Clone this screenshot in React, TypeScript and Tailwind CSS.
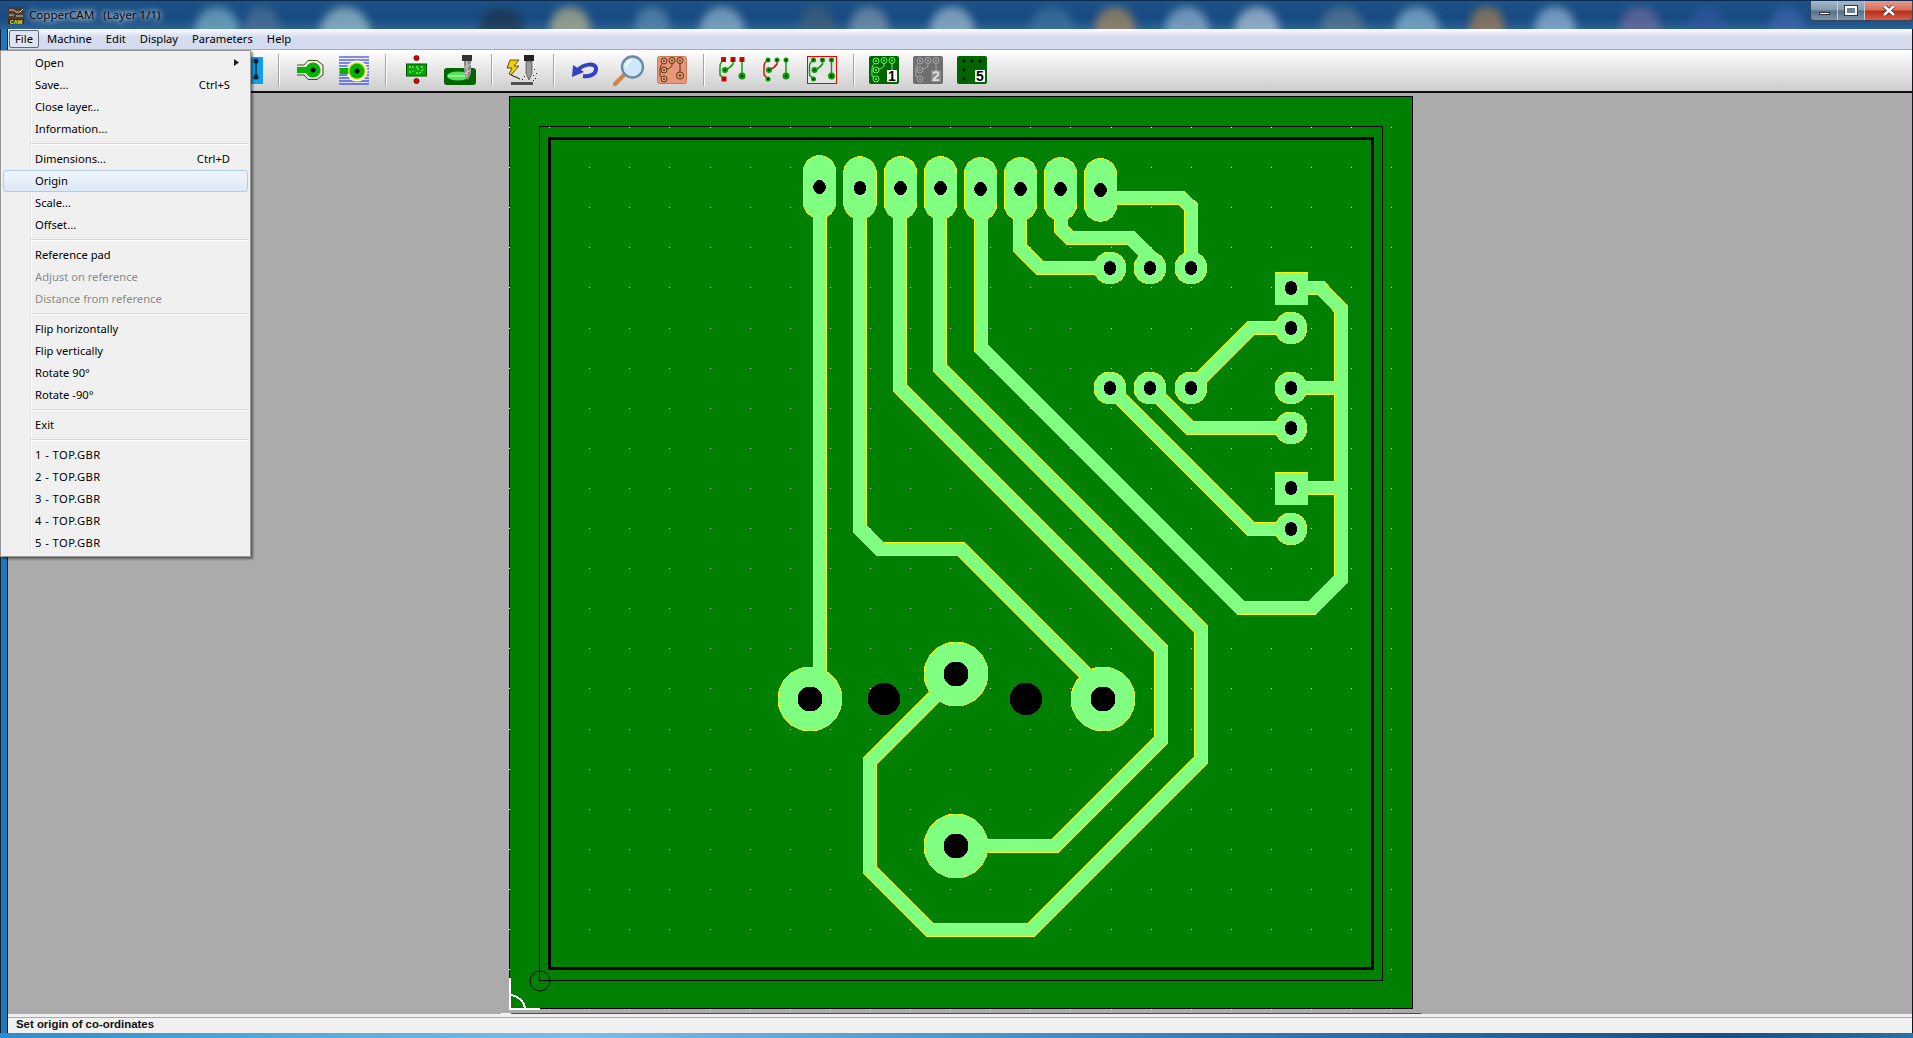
import React from 'react';

const COPPER = '#80ff80';
const EDGE = '#ffff00';

// trace centre lines, taken from the board picture
const traces: string[] = [
  '820,187 820,699',
  '860,188 860,529 880,549 961,549 1098,686',
  '900,188 900,388 1161,649 1161,740 1055,846 956,846',
  '940,188 940,368 1201,629 1201,760 1031,930 930,930 870,870 870,761 956,675',
  '981,189 981,348 1241,608 1312,608 1341,579 1341,309 1321,288 1291,288',
  '1020,189 1020,248 1040,268 1110,268',
  '1061,189 1061,229 1070,238 1131,238 1150,257 1150,268',
  '1100,198 1181,198 1191,207 1191,268',
  '1191,388 1251,328 1291,328',
  '1150,388 1190,428 1291,428',
  '1110,388 1251,529 1291,529',
  '1291,388 1341,388',
  '1291,488 1341,488',
];

const oblongs = [
  [819.5, 187],
  [860, 188],
  [900.5, 188],
  [940.5, 188],
  [980.5, 189],
  [1020.5, 189],
  [1060.5, 189],
  [1100.5, 190],
];
const smallPads = [
  [1110, 268],
  [1150, 268],
  [1191, 268],
  [1110, 388],
  [1150, 388],
  [1191, 388],
  [1291, 328],
  [1291, 388],
  [1291, 428],
  [1291, 529],
];
const squarePads = [
  [1291, 288],
  [1291, 488],
];
const bigPads = [
  [810, 699],
  [956, 674],
  [1103, 699],
  [956, 846],
];

function CopperLayer({ color, grow }: { color: string; grow: number }) {
  return (
    <g fill={color} stroke="none">
      {traces.map((t) => (
        <polyline key={t} points={t} fill="none" stroke={color} strokeWidth={12.8 + grow * 2} strokeLinejoin="miter" />
      ))}
      {oblongs.map(([x, y]) => (
        <rect key={x} x={x - 16 - grow} y={y - 31 - grow} width={32 + grow * 2} height={62 + grow * 2} rx={16 + grow} />
      ))}
      {smallPads.map(([x, y]) => (
        <circle key={`${x}-${y}`} cx={x} cy={y} r={15.7 + grow} />
      ))}
      {squarePads.map(([x, y]) => (
        <rect key={y} x={x - 15.5 - grow} y={y - 15.5 - grow} width={32 + grow * 2} height={32 + grow * 2} />
      ))}
      {bigPads.map(([x, y]) => (
        <circle key={`${x}-${y}`} cx={x} cy={y} r={31.7 + grow} />
      ))}
    </g>
  );
}

function Board() {
  const dots: React.ReactNode[] = [];
  for (let i = 0; i <= 22; i++) {
    for (let j = 0; j <= 22; j++) {
      dots.push(<rect key={`${i}-${j}`} x={Math.round(509 + i * 40.1)} y={Math.round(127 + j * 40.1)} width={1} height={1} fill="#fff" />);
    }
  }
  return (
    <svg width="920" height="921" viewBox="501 93 920 921" shapeRendering="crispEdges" className="block">
      <rect x="509.5" y="96.5" width="903" height="912" fill="#008000" stroke="#000" />
      {dots}
      <rect x="539.5" y="126.5" width="843" height="854" fill="none" stroke="#000" />
      <rect x="549.5" y="138.5" width="823" height="830" fill="none" stroke="#000" strokeWidth="3" />
      <circle cx="540" cy="981" r="10" fill="none" stroke="#000" shapeRendering="auto" />
      <path d="M510 978 V1008.5 H540 M511 995 C518 996 524 1001 525 1008" fill="none" stroke="#fff" strokeWidth="2" />
      <rect x="501" y="1013" width="920" height="1" fill="#008000" />
      <rect x="501" y="1013" width="10" height="1" fill="#fff" />
      <CopperLayer color={EDGE} grow={0.8} />
      <CopperLayer color={COPPER} grow={0} />
      <g fill="#000">
        {[...oblongs, ...smallPads, ...squarePads].map(([x, y]) => (
          <ellipse key={`${x}-${y}`} cx={x} cy={y} rx="6.4" ry="7" />
        ))}
        {bigPads.map(([x, y]) => (
          <circle key={`${x}-${y}`} cx={x} cy={y} r="12.5" />
        ))}
        <circle cx="884" cy="699" r="16.3" />
        <circle cx="1026" cy="699" r="16.3" />
      </g>
    </svg>
  );
}

function Sep({ className }: { className: string }) {
  return <div className={`h-[32px] w-[2px] shrink-0 border-l border-[#a4a4a4] bg-white ${className}`} />;
}

function PadsIcon({ pad, trace, square, first }: { pad: string; trace: string; square?: boolean; first: string }) {
  return (
    <>
      <path d="M5 3 C2 5 1 7 1 9 V18 L5 22" fill="none" stroke={first} strokeWidth="1.4" />
      <path d="M14 3 V7 C12 10 9 12 6 13" fill="none" stroke={trace} strokeWidth="1.4" />
      <path d="M23 3 V19" stroke="#00a000" strokeWidth="1.4" />
      {square ? (
        <g fill={pad}>
          <rect x="2" y="0" width="5" height="5" />
          <rect x="11.5" y="0" width="5" height="5" />
          <rect x="20.5" y="0" width="5" height="5" />
          <rect x="2.5" y="19.5" width="5" height="5" />
        </g>
      ) : (
        <g fill="#00a000">
          <circle cx="5" cy="3" r="2.5" />
          <circle cx="14" cy="3" r="2.5" />
          <circle cx="23" cy="3" r="2.5" />
          <circle cx="5" cy="22" r="2.5" />
        </g>
      )}
      <circle cx="6" cy="13" r="3" fill="#00a000" />
      <circle cx="23" cy="19" r="3.5" fill="#00a000" />
      <g fill="#000">
        <circle cx="5" cy="3" r="1" />
        <circle cx="14" cy="3" r="1" />
        <circle cx="23" cy="3" r="1" />
        <circle cx="5" cy="22" r="1" />
        <circle cx="6" cy="13" r="1" />
        <circle cx="23" cy="19" r="1.2" />
      </g>
    </>
  );
}

function RingBoard({ line, fill }: { line: string; fill: string }) {
  return (
    <g fill="none" stroke={line} strokeWidth="1">
      <path d="M6 7 C4 9 3 11 3 13 V20 L7 23" />
      <path d="M15 5 V10 C14 12 10 13 7 14" />
      <path d="M23 5 V19" />
      <g fill={fill}>
        <circle cx="7" cy="5" r="3" />
        <circle cx="15" cy="4.5" r="3" />
        <circle cx="23" cy="4.5" r="3" />
        <circle cx="7" cy="14" r="3" />
        <circle cx="7" cy="23" r="3" />
        <circle cx="23" cy="19.5" r="3.6" />
      </g>
      <g fill={line} stroke="none">
        <circle cx="7" cy="5" r="1" />
        <circle cx="15" cy="4.5" r="1" />
        <circle cx="23" cy="4.5" r="1" />
        <circle cx="7" cy="14" r="1" />
        <circle cx="7" cy="23" r="1" />
        <circle cx="23" cy="19.5" r="1.2" />
      </g>
    </g>
  );
}

function NumberBoard({ bg, num, n, chip, line }: { bg: string; num: string; n: string; chip: string; line?: string }) {
  return (
    <svg width="30" height="28" viewBox="0 0 30 28" className="shrink-0">
      <rect x="0" y="0" width="30" height="28" rx="2" fill={bg} />
      {line ? (
        <RingBoard line={line} fill={bg} />
      ) : (
        <g fill="#000">
          <circle cx="7" cy="5" r="1.4" />
          <circle cx="15" cy="5" r="1.4" />
          <circle cx="23" cy="5" r="1.4" />
          <circle cx="7" cy="14" r="1.4" />
          <circle cx="7" cy="23" r="1.4" />
        </g>
      )}
      <rect x="18" y="14" width="10" height="12" fill={chip} />
      <text x="23" y="25" textAnchor="middle" fontSize="14" fontWeight="700" fontFamily="'Liberation Sans', sans-serif" fill={num}>
        {n}
      </text>
    </svg>
  );
}

function Toolbar() {
  return (
    <div className="flex h-[43px] items-center border-b-2 border-[#101010] bg-[linear-gradient(#ffffff,#f4f4f4_20%,#cdcdcd)] pb-[1px]">
      <svg width="35" height="27" viewBox="0 0 35 27" className="ml-[220px] shrink-0">
        <rect width="35" height="27" fill="#10a0ea" />
        <path d="M28 4 V20" stroke="#102030" strokeWidth="1.4" />
        <circle cx="28" cy="4" r="2.6" fill="#102030" />
        <circle cx="28" cy="20" r="2.6" fill="#102030" />
      </svg>
      <Sep className="ml-[15px]" />

      <svg width="28" height="22" viewBox="0 0 28 22" className="ml-[16px] shrink-0">
        <path d="M1 6 H8 L12 1.5 H21 L27 6 V16 L21 20.5 H12 L8 16 H1" fill="none" stroke="#4a4a10" />
        <rect x="1" y="8" width="10" height="6" fill="#00b400" />
        <circle cx="17" cy="11" r="7.5" fill="#00b400" />
        <circle cx="17" cy="11" r="2.5" fill="#000" />
      </svg>
      <svg width="30" height="29" viewBox="0 0 30 29" className="ml-[15px] shrink-0">
        <g stroke="#0a20e0" strokeWidth="1">
          {[1, 4, 7, 10, 13, 16, 19, 22, 25, 28].map((y) => (
            <path key={y} d={`M0 ${y} H30`} />
          ))}
        </g>
        <circle cx="18" cy="15" r="10.5" fill="#fff" />
        <rect x="1" y="12" width="12" height="6" fill="#00b400" />
        <circle cx="18" cy="15" r="9" fill="#e8e020" />
        <circle cx="18" cy="15" r="7.5" fill="#00b400" />
        <circle cx="18" cy="15" r="2.5" fill="#000" />
      </svg>
      <Sep className="ml-[16px]" />

      <svg width="21" height="30" viewBox="0 0 21 30" className="ml-[19px] shrink-0">
        <rect x="0.5" y="9" width="20" height="12" fill="#00a800" stroke="#005000" />
        <path d="M3 12 H7 V14 M10 12 H12 V16 M15 12 H18 M3 17 H6 L8 15 M10 18 H14 L16 15 H18" fill="none" stroke="#c8f0a0" strokeDasharray="2 1" />
        <circle cx="10.5" cy="3" r="2.6" fill="#e00000" stroke="#200000" strokeWidth="0.6" />
        <circle cx="10.5" cy="26" r="2.6" fill="#e00000" stroke="#200000" strokeWidth="0.6" />
      </svg>
      <svg width="32" height="30" viewBox="0 0 32 30" className="ml-[17px] shrink-0">
        <rect x="0" y="13" width="32" height="17" rx="3" fill="#006400" />
        <ellipse cx="14" cy="21" rx="11" ry="4.5" fill="#58e058" />
        <path d="M4 21 H24" stroke="#c0ffc0" />
        <rect x="18" y="0" width="10" height="6" fill="#333" />
        <path d="M20 6 H27 V19 L24 25 L20 19 Z" fill="#8a8a8a" />
        <path d="M23 6 V22 M20 13 L27 9 M20 19 L27 15" stroke="#d8d8d8" fill="none" />
      </svg>
      <Sep className="ml-[15px]" />

      <svg width="32" height="31" viewBox="0 0 32 31" className="ml-[13px] shrink-0">
        <path d="M4 5 H13 L8 11 H13 L5 20 L14 24 L3 19 L6 13 H1 Z" fill="#f0d000" stroke="#403000" strokeWidth="0.8" />
        <rect x="18" y="0" width="10" height="6" fill="#222" />
        <path d="M20 6 H26 V18 L23 25 L20 18 Z" fill="#9a9a9a" stroke="#333" strokeWidth="0.6" />
        <rect x="5" y="27" width="22" height="3" fill="#505050" />
        <g fill="#222">
          <rect x="28" y="14" width="1" height="1" />
          <rect x="30" y="18" width="1" height="1" />
          <rect x="27" y="20" width="1" height="1" />
          <rect x="29" y="23" width="1" height="1" />
          <rect x="18" y="21" width="1" height="1" />
          <rect x="16" y="24" width="1" height="1" />
          <rect x="27" y="25" width="1" height="1" />
        </g>
      </svg>
      <Sep className="ml-[15px]" />

      <svg width="27" height="18" viewBox="0 0 27 18" className="ml-[16px] shrink-0">
        <path d="M7 9 C12 3 25 1 25 8 C25 14 17 16 12 15" fill="none" stroke="#3340c0" strokeWidth="4" />
        <polygon points="1,16 2,4 13,11" fill="#3340c0" />
      </svg>
      <svg width="32" height="31" viewBox="0 0 32 31" className="ml-[15px] shrink-0">
        <path d="M11 20 L2 29" stroke="#d08840" strokeWidth="4.5" strokeLinecap="round" />
        <circle cx="19.5" cy="12" r="10.5" fill="#cfe8ff" stroke="#6a8aa8" strokeWidth="2.4" />
        <path d="M13 12 C13 8 16 6 19 5.5" fill="none" stroke="#fff" strokeWidth="2" />
      </svg>
      <svg width="30" height="28" viewBox="0 0 30 28" className="ml-[12px] shrink-0">
        <rect x="0.5" y="0.5" width="29" height="27" rx="2" fill="#e8967a" stroke="#c87858" />
        <RingBoard line="#5a3010" fill="#e8a070" />
      </svg>
      <Sep className="ml-[16px]" />

      <svg width="27" height="26" viewBox="0 0 27 26" className="ml-[14px] shrink-0">
        <PadsIcon pad="#e80000" trace="#00a000" first="#00a000" square />
      </svg>
      <svg width="27" height="26" viewBox="0 0 27 26" className="ml-[17px] shrink-0">
        <PadsIcon pad="#00a000" trace="#e80000" first="#e80000" />
      </svg>
      <svg width="30" height="28" viewBox="-1.5 -1 30 28" className="ml-[17px] shrink-0">
        <rect x="-1" y="-0.5" width="29" height="27" fill="#e4e4e4" stroke="#f00000" />
        <PadsIcon pad="#00a000" trace="#00a000" first="#00a000" />
      </svg>
      <Sep className="ml-[16px]" />

      <div className="ml-[14px] flex gap-[14px]">
        <NumberBoard bg="#006400" chip="#fff" num="#000" n="1" line="#60ff60" />
        <NumberBoard bg="#6e6e6e" chip="#8a8a8a" num="#e0e0e0" n="2" line="#a8a8a8" />
        <NumberBoard bg="#006400" chip="#fff" num="#000" n="5" />
      </div>
    </div>
  );
}

type Item = { label: string; key?: string; off?: boolean; hot?: boolean; sub?: boolean; wide?: boolean } | null;

const fileMenu: Item[] = [
  { label: 'Open', sub: true },
  { label: 'Save...', key: 'Ctrl+S' },
  { label: 'Close layer...' },
  { label: 'Information...' },
  null,
  { label: 'Dimensions...', key: 'Ctrl+D' },
  { label: 'Origin', hot: true },
  { label: 'Scale...' },
  { label: 'Offset...' },
  null,
  { label: 'Reference pad' },
  { label: 'Adjust on reference', off: true },
  { label: 'Distance from reference', off: true },
  null,
  { label: 'Flip horizontally' },
  { label: 'Flip vertically' },
  { label: 'Rotate 90°' },
  { label: 'Rotate -90°' },
  null,
  { label: 'Exit' },
  null,
  { label: '1 - TOP.GBR', wide: true },
  { label: '2 - TOP.GBR', wide: true },
  { label: '3 - TOP.GBR', wide: true },
  { label: '4 - TOP.GBR', wide: true },
  { label: '5 - TOP.GBR', wide: true },
];

function FileMenu() {
  return (
    <div className="absolute left-0 top-[50px] z-20 w-[251px] border border-[#979797] bg-[#f0f0f0] pb-[2px] pt-[1px] shadow-[2px_2px_2px_rgba(0,0,0,0.45)]">
      <div className="absolute bottom-[2px] left-[29px] top-[1px] w-[2px] border-l border-[#e2e3e3] bg-white" />
      {fileMenu.map((item, i) =>
        item ? (
          <div
            key={item.label}
            className={`relative flex h-[22px] items-center ${item.off ? 'text-[#8b8b8b]' : 'text-black'} ${
              item.hot ? 'mx-[2px] rounded-[3px] border border-[#aeccf0] bg-[linear-gradient(#f0f5fb,#dce8f6)] pl-[31px] pr-[17px]' : 'pl-[34px] pr-[20px]'
            }`}
          >
            <span className={item.wide ? 'tracking-[0.45px]' : ''}>{item.label}</span>
            {item.key && <span className="ml-auto">{item.key}</span>}
            {item.sub && (
              <svg width="5" height="7" viewBox="0 0 5 7" className="absolute right-[11px] top-[7px]">
                <polygon points="0,0 5,3.5 0,7" fill="#202020" />
              </svg>
            )}
          </div>
        ) : (
          <div key={i} className="relative ml-[30px] mr-[2px] flex h-[8px] items-center">
            <div className="h-[2px] w-full border-t border-[#d8d8d8] bg-white" />
          </div>
        ),
      )}
    </div>
  );
}

const glassBlobs = [
  { x: 195, w: 44, c: '#8fc0d0' },
  { x: 320, w: 50, c: '#b8d8d8' },
  { x: 245, w: 34, c: '#5a7a98' },
  { x: 480, w: 44, c: '#203040' },
  { x: 550, w: 40, c: '#d8c890' },
  { x: 635, w: 34, c: '#6f98b8' },
  { x: 700, w: 44, c: '#a8c8dc' },
  { x: 800, w: 34, c: '#4a6478' },
  { x: 850, w: 38, c: '#90a4b4' },
  { x: 930, w: 44, c: '#b8d0e0' },
  { x: 1030, w: 44, c: '#4a78a0' },
  { x: 1095, w: 40, c: '#c89858' },
  { x: 1165, w: 44, c: '#a8c4dc' },
  { x: 1235, w: 44, c: '#d0dce8' },
  { x: 1320, w: 44, c: '#6a8298' },
  { x: 1395, w: 44, c: '#a0c8dc' },
  { x: 1470, w: 34, c: '#c08848' },
  { x: 1535, w: 40, c: '#b0cce6' },
  { x: 1620, w: 40, c: '#8070a0' },
  { x: 1690, w: 34, c: '#3858a8' },
  { x: 1770, w: 34, c: '#4868b8' },
];

function TitleBar() {
  return (
    <div className="relative h-[29px] shrink-0 overflow-hidden border-t border-[#0e2c50] bg-[linear-gradient(#1c5288,#174a80_60%,#2d6094)]">
      {glassBlobs.map((b) => (
        <div
          key={b.x}
          className="absolute top-[6px] h-[30px] rounded-t-full opacity-60 blur-[4px]"
          style={{ left: b.x, width: b.w, background: b.c }}
        />
      ))}
      <div className="relative flex h-full items-center pl-[8px]">
        <svg width="16" height="17" viewBox="0 0 16 17" className="mt-[1px] shrink-0">
          <rect width="16" height="12" fill="#4a3a30" />
          <rect y="12" width="16" height="5" fill="#3a2a20" />
          <path d="M1 3 H6 L8 5 H12 L15 2 M1 8 H6 M8 9 H15" fill="none" stroke="#d8c8a8" />
          <text x="8" y="16.6" textAnchor="middle" fontSize="5.5" fontWeight="700" fill="#f8f000" fontFamily="'Liberation Sans', sans-serif">
            CAM
          </text>
        </svg>
        <span className="ml-[5px] whitespace-pre text-[11.6px] text-[#0a0a10] [text-shadow:0_0_5px_#fff,0_0_8px_#fff]">CopperCAM   (Layer 1/1)</span>
      </div>
      <div className="absolute right-0 top-0 flex h-[20px] w-[103px] overflow-hidden rounded-b-[4px] border border-t-0 border-[#33465c]">
        <div className="flex w-[27px] items-center justify-center border-r border-[#c0cdd8] bg-[linear-gradient(#a8b8c6,#8098ae_48%,#566e86_52%,#7d93a8)]">
          <div className="mt-[5px] h-[3px] w-[11px] border border-[#334] bg-white" />
        </div>
        <div className="flex w-[27px] items-center justify-center border-r border-[#c0cdd8] bg-[linear-gradient(#a8b8c6,#8098ae_48%,#566e86_52%,#7d93a8)]">
          <div className="h-[9px] w-[12px] border-2 border-white outline outline-[#334] bg-[#6a8098]" />
        </div>
        <div className="flex flex-1 items-center justify-center bg-[linear-gradient(#e59a8a,#d8705c_48%,#b82c14_52%,#d4604c)]">
          <svg width="14" height="11" viewBox="0 0 14 11">
            <path d="M2 1 L12 10 M12 1 L2 10" stroke="#334" strokeWidth="4" />
            <path d="M2 1 L12 10 M12 1 L2 10" stroke="#fff" strokeWidth="2.4" />
          </svg>
        </div>
      </div>
    </div>
  );
}

const menuNames = [
  { n: 'Machine', c: 'ml-[8px]' },
  { n: 'Edit', c: 'ml-[14px]' },
  { n: 'Display', c: 'ml-[14px]' },
  { n: 'Parameters', c: 'ml-[14px]' },
  { n: 'Help', c: 'ml-[14px]' },
];

export default function App() {
  return (
    <div className="relative flex h-screen w-screen flex-col overflow-hidden bg-[#1c5a94] font-['Noto_Sans',sans-serif] text-[11.2px] leading-none">
      <TitleBar />
      <div className="flex min-h-0 flex-1">
        <div className="w-[7px] shrink-0 border-l border-[#123] bg-[#1f78bc]" />
        <div className="flex min-w-0 flex-1 flex-col border-x border-[#101820]">
          <div className="flex h-[21px] shrink-0 items-center border-b border-[#a9a9c0] bg-[linear-gradient(#fdfdff,#d5dcef_40%,#d5dbee)] pl-[1px] text-black">
            <div className="flex h-[18px] w-[30px] items-center justify-center rounded-[2px] border border-[#5f6a78] bg-[#dfe4f0]">File</div>
            {menuNames.map((m) => (
              <span key={m.n} className={m.c}>
                {m.n}
              </span>
            ))}
          </div>
          <Toolbar />
          <div className="min-h-0 flex-1 bg-[#ababab] pl-[493px]">
            <Board />
          </div>
          <div className="h-[19px] shrink-0 bg-[#f0f0f0] pt-[3px]">
            <div className="h-[15px] border-t border-[#a8a8a8] pl-[8px] pt-[1px] font-['Liberation_Sans',sans-serif] text-[11.4px] font-bold text-[#101010]">
              Set origin of co-ordinates
            </div>
          </div>
        </div>
      </div>
      <div className="h-[5px] shrink-0 bg-[linear-gradient(90deg,#2f8cc8,#4aa6da_12%,#7bbde6_30%,#4d97cf_50%,#2d6fae_70%,#1a4e85_90%,#2a6fa5)]" />
      <FileMenu />
    </div>
  );
}
